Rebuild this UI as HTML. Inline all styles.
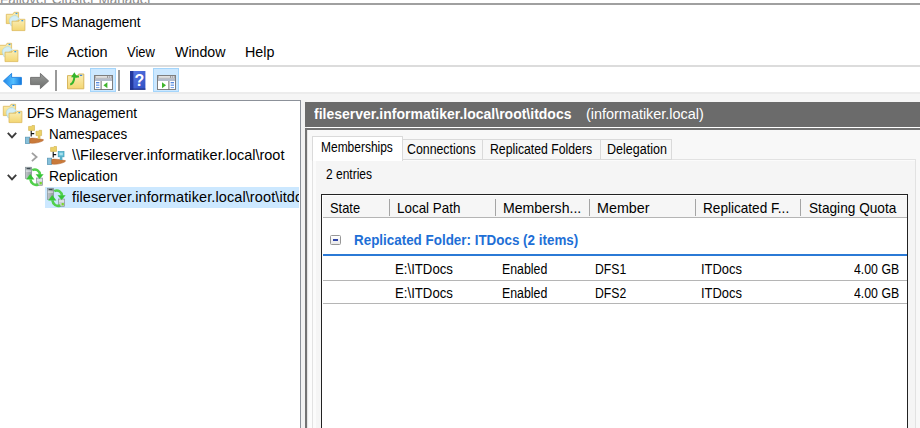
<!DOCTYPE html>
<html><head><meta charset="utf-8"><title>DFS Management</title>
<style>
html,body{margin:0;padding:0}
body{width:920px;height:428px;overflow:hidden;background:#fff;position:relative;font-family:"Liberation Sans",sans-serif;font-size:13.5px;color:#000}
.a{position:absolute;white-space:nowrap;line-height:16px}
.b{position:absolute}
svg{position:absolute;overflow:visible}
</style></head><body>
<!-- cut-off title of parent window -->
<!-- menu bottom line -->
<div class="b" style="left:0;top:65px;width:920px;height:2px;background:#dcdcdc"></div>
<!-- band under toolbar -->
<div class="b" style="left:0;top:92px;width:920px;height:9.5px;background:#f5f5f5"></div>
<div class="b" style="left:0;top:92px;width:920px;height:2px;background:#ececec"></div>
<!-- toolbar toggles -->
<div class="b" style="left:89.5px;top:68px;width:26.5px;height:24px;background:#cce8ff;border:1px solid #a4d5fb;box-sizing:border-box"></div>
<div class="b" style="left:152.8px;top:68px;width:26.5px;height:24px;background:#cce8ff;border:1px solid #a4d5fb;box-sizing:border-box"></div>
<div class="b" style="left:55.1px;top:70.2px;width:1.8px;height:20.7px;background:#999"></div>
<div class="b" style="left:118.4px;top:70.2px;width:1.8px;height:20.7px;background:#999"></div>
<div class="b" style="left:299px;top:100px;width:8px;height:330px;background:#f2f2f2"></div>
<!-- tree -->
<div class="b" style="left:-1px;top:100px;width:302px;height:340px;border:1.3px solid #8c9199;box-sizing:border-box;background:#fff"></div>
<div class="b" style="left:45px;top:187px;width:253.7px;height:20.7px;background:#cce8ff"></div>
<!-- right pane background -->
<div class="b" style="left:305px;top:101.5px;width:615px;height:25px;background:#6b6b6b"></div>
<div class="b" style="left:305px;top:128px;width:615px;height:300px;background:#f8f8f8"></div>
<div class="b" style="left:306.8px;top:130px;width:1.7px;height:300px;background:#e6e6e6"></div>
<div class="b" style="left:308.5px;top:160px;width:8px;height:270px;background:#fcfcfc"></div>
<div class="b" style="left:305px;top:128px;width:615px;height:2.4px;background:#737373"></div>
<div class="b" style="left:304.6px;top:128px;width:2.2px;height:300px;background:#737373"></div>
<!-- tab page -->
<div class="b" style="left:312.1px;top:159px;width:603.8px;height:280px;border:1px solid #e2e2e2;box-sizing:border-box;background:#fbfbfb"></div>
<div class="b" style="left:316px;top:161px;width:598.5px;height:270px;background:#f5f5f5"></div>
<!-- tabs -->
<div class="b" style="left:402px;top:138.5px;width:269.5px;height:21.5px;border:1px solid #dadada;box-sizing:border-box;background:#f7f7f7"></div>
<div class="b" style="left:482.3px;top:138.5px;width:1px;height:21px;background:#dadada"></div>
<div class="b" style="left:599.5px;top:138.5px;width:1px;height:21px;background:#dadada"></div>
<div class="b" style="left:312.3px;top:136.3px;width:90.6px;height:25px;border:1px solid #dadada;border-bottom:none;box-sizing:border-box;background:#fff"></div>
<!-- list -->
<div class="b" style="left:321px;top:194px;width:587.3px;height:260px;border:1.7px solid #222;box-sizing:border-box;background:#fff"></div>
<div class="b" style="left:322.6px;top:195.7px;width:584px;height:21.6px;background:#f6f6f6"></div>
<div class="b" style="left:322.6px;top:217.3px;width:584px;height:1.2px;background:#b5b5b5"></div>
<div class="b" style="left:389px;top:199px;width:1.2px;height:17px;background:#a5a5a5"></div>
<div class="b" style="left:495px;top:199px;width:1.2px;height:17px;background:#a5a5a5"></div>
<div class="b" style="left:589px;top:199px;width:1.2px;height:17px;background:#a5a5a5"></div>
<div class="b" style="left:695px;top:199px;width:1.2px;height:17px;background:#a5a5a5"></div>
<div class="b" style="left:800.2px;top:199px;width:1.2px;height:17px;background:#a5a5a5"></div>
<!-- group -->
<div class="b" style="left:330.2px;top:235px;width:10.5px;height:10.4px;border:1.4px solid #979797;border-radius:1.5px;box-sizing:border-box;background:linear-gradient(#fff,#e9e9e9)"></div>
<div class="b" style="left:332.8px;top:239.4px;width:5.4px;height:1.5px;background:#2f45a8"></div>
<div class="b" style="left:322.6px;top:254.2px;width:584px;height:1.8px;background:#2b7ad6"></div>
<div class="b" style="left:322.6px;top:279.6px;width:584px;height:1.1px;background:#b5b5b5"></div>
<div class="b" style="left:322.6px;top:303.4px;width:584px;height:1.1px;background:#b5b5b5"></div>
<svg width="0" height="0" style="left:0;top:0">
<defs>
<linearGradient id="fg" x1="0" y1="0" x2="0" y2="1"><stop offset="0" stop-color="#fbefb8"/><stop offset="1" stop-color="#f3d672"/></linearGradient>
<linearGradient id="bg1" x1="0" y1="0" x2="1" y2="0"><stop offset="0" stop-color="#1f86e8"/><stop offset="0.55" stop-color="#55c0ff"/><stop offset="1" stop-color="#1478dc"/></linearGradient>
<linearGradient id="gg1" x1="0" y1="0" x2="0" y2="1"><stop offset="0" stop-color="#9a9c9a"/><stop offset="1" stop-color="#6c6e6c"/></linearGradient>
<linearGradient id="hg" x1="0" y1="0" x2="1" y2="1"><stop offset="0" stop-color="#5b7be6"/><stop offset="1" stop-color="#2f4fc4"/></linearGradient>
<linearGradient id="sv" x1="0" y1="0" x2="1" y2="0"><stop offset="0" stop-color="#c4cacc"/><stop offset="1" stop-color="#8e989c"/></linearGradient>
<g id="dfs">
  <path d="M0.3 2.3 H6.8 L8 0.3 H12.6 V11.6 H0.3 Z" fill="url(#fg)" stroke="#dcb95a" stroke-width="0.8"/>
  <rect x="9.6" y="0.8" width="1.8" height="1.3" fill="#3d9be0"/>
  <path d="M3.4 9.6 C2.8 5.8 6.5 3 10.4 3.8 L13.4 6.8 L9.6 9.2 L8.6 13.2 L5 13.8 Z" fill="#d4eef6" stroke="#a8d6e8" stroke-width="0.6"/>
  <path d="M6 9.2 H12.8 L14 7.3 H18.9 V18.6 H6 Z" fill="url(#fg)" stroke="#dcb95a" stroke-width="0.8"/>
  <rect x="15.4" y="8" width="1.8" height="1.3" fill="#3d9be0"/>
</g>
<g id="hand">
  <rect x="0.4" y="12.2" width="4.2" height="6.2" fill="#86c0da" stroke="#5f9cba" stroke-width="0.8"/>
  <path d="M4.8 13.4 C8 12.6 12 13.6 18.4 14.6 C19 15.6 17 16.6 13 17.6 C10 18.4 7 18.4 4.8 18 Z" fill="#c97a3a" stroke="#b0602a" stroke-width="0.5"/>
  <path d="M6.2 5.5 V11.4 M6.2 8.6 H9.2" stroke="#111" stroke-width="1.1" fill="none"/>
  <path d="M3.6 1.4 H6.4 L7 0.5 H9.5 V5.4 H3.6 Z" fill="#ecd166" stroke="#cfae48" stroke-width="0.6"/>
</g>
<g id="ns">
  <use href="#hand"/>
  <path d="M11 6.2 H13.6 L14.2 5.3 H16.6 V10.6 H11 Z" fill="#ecd166" stroke="#cfae48" stroke-width="0.6"/>
  <rect x="12.8" y="10.6" width="2.6" height="3.4" fill="#e2c45a"/>
</g>
<g id="nsr">
  <use href="#hand"/>
  <rect x="11.2" y="5.6" width="5.8" height="5.2" fill="#62c0d8" stroke="#3f9cb8" stroke-width="0.7"/>
  <rect x="12.4" y="6.8" width="3.4" height="2.4" fill="#a8e0ee"/>
  <rect x="12.8" y="10.8" width="2.6" height="3.2" fill="#58b0c8"/>
</g>
<g id="rep">
  <rect x="0.4" y="0.2" width="6.2" height="11.2" fill="url(#sv)" stroke="#7a868c" stroke-width="0.6"/>
  <rect x="1.6" y="0.9" width="3.8" height="1.2" fill="#3e4a52"/>
  <rect x="0.8" y="3.6" width="5.4" height="0.9" fill="#eef2f4"/>
  <rect x="11.6" y="11" width="6" height="7.3" fill="#c9d0d4" stroke="#7a868c" stroke-width="0.6"/>
  <rect x="12" y="12.6" width="5.2" height="0.9" fill="#f4f6f8"/>
  <rect x="14.6" y="15" width="2.2" height="2.4" fill="#7ad82a"/>
  <path d="M7.2 3.2 C11 1.2 14.8 3.8 15 7.8" fill="none" stroke="#52d04c" stroke-width="2.6"/>
  <path d="M10.6 7.2 H18.6 L14.6 12 Z" fill="#36c436"/>
  <path d="M13.4 17.4 C9.4 18.8 6 16.6 5.4 12.4" fill="none" stroke="#52d04c" stroke-width="2.6"/>
  <path d="M1.2 12.6 L5.2 7 L9.4 12.6 Z" fill="#36c436"/>
</g>
<g id="win">
  <rect x="0.5" y="0.5" width="18" height="14" fill="#fff" stroke="#7e7e7e" stroke-width="1"/>
  <rect x="1" y="1" width="17" height="2.6" fill="#9a9a9a"/>
  <rect x="1.6" y="1.3" width="11.4" height="1.3" fill="#fff"/>
  <rect x="14" y="1.3" width="1.4" height="1.3" fill="#e8eefa"/><rect x="16" y="1.3" width="1.4" height="1.3" fill="#e8eefa"/>
  <rect x="1" y="3.6" width="17" height="2.4" fill="#b4bccb"/>
</g>
<g id="winl">
  <use href="#win"/>
  <rect x="6.6" y="6" width="1" height="8.5" fill="#6e6e6e"/>
  <rect x="2" y="7.2" width="3.4" height="1.1" fill="#2f6fd6"/><rect x="2" y="9.6" width="3.4" height="1.1" fill="#4a86e0"/><rect x="2" y="12" width="3.4" height="1.1" fill="#7ea8e8"/>
  <path d="M13.4 7.2 V13.2 L9.4 10.2 Z" fill="#3fb52c"/>
</g>
<g id="winr">
  <use href="#win"/>
  <rect x="11.4" y="6" width="1" height="8.5" fill="#6e6e6e"/>
  <rect x="13.6" y="7.2" width="3.4" height="1.1" fill="#2f6fd6"/><rect x="13.6" y="9.6" width="3.4" height="1.1" fill="#4a86e0"/><rect x="13.6" y="12" width="3.4" height="1.1" fill="#7ea8e8"/>
  <path d="M5 7.2 V13.2 L9 10.2 Z" fill="#3fb52c"/>
</g>
</defs>
</svg>
<!-- DFS icons -->
<svg width="20" height="20" style="left:6.2px;top:11.6px"><use href="#dfs"/></svg>
<svg width="20" height="20" style="left:-0.8px;top:43.2px"><use href="#dfs"/></svg>
<svg width="20" height="20" style="left:2.6px;top:104px"><use href="#dfs"/></svg>
<!-- toolbar -->
<svg width="20" height="17" style="left:3px;top:73px"><path d="M0.4 8 L8.6 0.4 V4.4 H18.4 V11.6 H8.6 V15.6 Z" fill="url(#bg1)" stroke="#1b7fe0" stroke-width="0.9" stroke-linejoin="round"/></svg>
<svg width="20" height="17" style="left:30px;top:73px"><path d="M18.6 8 L10.4 0.4 V4.4 H0.6 V11.6 H10.4 V15.6 Z" fill="url(#gg1)" stroke="#6a6a6a" stroke-width="0.9" stroke-linejoin="round"/></svg>
<svg width="18" height="18" style="left:67px;top:72.4px">
  <path d="M0.5 3.6 H10.6 L11.6 2 H16.8 V16.8 H0.5 Z" fill="url(#fg)" stroke="#d4b052" stroke-width="0.9"/>
  <rect x="12.8" y="2.8" width="2.4" height="1.2" fill="#3d86e0"/>
  <path d="M3.2 12.6 C6.4 11.6 7.2 8 7.4 4.6 L12 4.4" fill="none" stroke="#35b52c" stroke-width="2"/>
  <path d="M4 5.2 L7.4 0.2 L10.4 5.6 Z" fill="#35b52c"/>
</svg>
<svg width="19" height="15" style="left:94.1px;top:75px"><use href="#winl"/></svg>
<svg width="19" height="15" style="left:157px;top:75px"><use href="#winr"/></svg>
<svg width="16" height="19" style="left:130.1px;top:71.1px">
  <rect x="0" y="0" width="15.4" height="18.7" fill="url(#hg)"/>
  <rect x="0" y="0" width="3.4" height="18.7" fill="#23389c"/>
  <rect x="0" y="17.6" width="15.4" height="1.1" fill="#1e2f80"/>
  <text x="9.4" y="15.2" text-anchor="middle" font-family="Liberation Sans, sans-serif" font-weight="bold" font-size="16" fill="#fff">?</text>
</svg>
<!-- tree icons -->
<svg width="20" height="20" style="left:25px;top:125px"><use href="#ns"/></svg>
<svg width="20" height="20" style="left:47px;top:146px"><use href="#nsr"/></svg>
<svg width="20" height="20" style="left:25px;top:167px"><use href="#rep"/></svg>
<svg width="20" height="20" style="left:47.2px;top:188px"><use href="#rep"/></svg>
<!-- chevrons -->
<svg width="12" height="8" style="left:7px;top:131.6px"><path d="M0.8 0.9 L5 5.4 L9.2 0.9" fill="none" stroke="#3c3c3c" stroke-width="1.9"/></svg>
<svg width="12" height="8" style="left:7px;top:173.8px"><path d="M0.8 0.9 L5 5.4 L9.2 0.9" fill="none" stroke="#3c3c3c" stroke-width="1.9"/></svg>
<svg width="8" height="12" style="left:31px;top:152px"><path d="M0.9 0.8 L5.6 5 L0.9 9.2" fill="none" stroke="#a0a0a0" stroke-width="1.8"/></svg>

<div class="a" id="fo" style="left:0.07px;top:-9.00px;font-size:14.5px;color:#8c8c8c;transform:scaleX(0.9323);transform-origin:0 0;clip-path:inset(0 0 3px 0);">Failover Cluster Manager</div>
<div class="a" id="title" style="left:31.07px;top:14.00px;font-size:14.5px;color:#000;transform:scaleX(0.9303);transform-origin:0 0;">DFS Management</div>
<div class="a" id="m1" style="left:27.08px;top:44.00px;font-size:14.5px;color:#000;transform:scaleX(0.9238);transform-origin:0 0;">File</div>
<div class="a" id="m2" style="left:67.00px;top:44.00px;font-size:14.5px;color:#000;letter-spacing:0.073px;">Action</div>
<div class="a" id="m3" style="left:127.20px;top:44.00px;font-size:14.5px;color:#000;transform:scaleX(0.8960);transform-origin:0 0;">View</div>
<div class="a" id="m4" style="left:175.00px;top:44.00px;font-size:14.5px;color:#000;transform:scaleX(0.9789);transform-origin:0 0;">Window</div>
<div class="a" id="m5" style="left:244.61px;top:44.00px;font-size:14.5px;color:#000;transform:scaleX(0.9876);transform-origin:0 0;">Help</div>
<div class="a" id="t1" style="left:27.07px;top:105.00px;font-size:14.5px;color:#000;transform:scaleX(0.9345);transform-origin:0 0;">DFS Management</div>
<div class="a" id="t2" style="left:49.48px;top:126.00px;font-size:14.5px;color:#000;transform:scaleX(0.9236);transform-origin:0 0;">Namespaces</div>
<div class="a" id="t3" style="left:72.00px;top:147.00px;font-size:14.5px;color:#000;transform:scaleX(0.9985);transform-origin:0 0;">\\Fileserver.informatiker.local\root</div>
<div class="a" id="t4" style="left:49.44px;top:168.00px;font-size:14.5px;color:#000;transform:scaleX(0.9565);transform-origin:0 0;">Replication</div>
<div class="a" id="h1" style="left:313.60px;top:106.00px;font-size:14.5px;color:#fff;transform:scaleX(0.9652);transform-origin:0 0;font-weight:bold;">fileserver.informatiker.local\root\itdocs</div>
<div class="a" id="h2" style="left:585.60px;top:106.00px;font-size:14.5px;color:#fff;transform:scaleX(0.9947);transform-origin:0 0;">(informatiker.local)</div>
<div class="a" id="c1" style="left:330.40px;top:200.00px;font-size:14.5px;color:#000;transform:scaleX(0.8878);transform-origin:0 0;">State</div>
<div class="a" id="c2" style="left:396.67px;top:200.00px;font-size:14.5px;color:#000;transform:scaleX(0.9250);transform-origin:0 0;">Local Path</div>
<div class="a" id="c3" style="left:502.78px;top:200.00px;font-size:14.5px;color:#000;transform:scaleX(0.9707);transform-origin:0 0;">Membersh...</div>
<div class="a" id="c4" style="left:596.51px;top:200.00px;font-size:14.5px;color:#000;transform:scaleX(0.9885);transform-origin:0 0;">Member</div>
<div class="a" id="c5" style="left:702.81px;top:200.00px;font-size:14.5px;color:#000;transform:scaleX(0.9377);transform-origin:0 0;">Replicated F...</div>
<div class="a" id="c6" style="left:808.75px;top:200.00px;font-size:14.5px;color:#000;transform:scaleX(0.9424);transform-origin:0 0;">Staging Quota</div>
<div class="a" id="g" style="left:353.60px;top:232.00px;font-size:14.5px;color:#1e6fd6;transform:scaleX(0.9246);transform-origin:0 0;font-weight:bold;">Replicated Folder: ITDocs (2 items)</div>
<div class="a" id="tab1" style="left:320.64px;top:139.00px;font-size:14.0px;color:#000;transform:scaleX(0.8551);transform-origin:0 0;">Memberships</div>
<div class="a" id="tab2" style="left:407.00px;top:141.00px;font-size:14.0px;color:#000;transform:scaleX(0.8814);transform-origin:0 0;">Connections</div>
<div class="a" id="tab3" style="left:490.13px;top:141.00px;font-size:14.0px;color:#000;transform:scaleX(0.8749);transform-origin:0 0;">Replicated Folders</div>
<div class="a" id="tab4" style="left:606.86px;top:141.00px;font-size:14.0px;color:#000;transform:scaleX(0.8941);transform-origin:0 0;">Delegation</div>
<div class="a" id="ent" style="left:325.60px;top:166.00px;font-size:14.0px;color:#000;transform:scaleX(0.8567);transform-origin:0 0;">2 entries</div>
<div class="a" id="r1a" style="left:395.31px;top:261.00px;font-size:14.0px;color:#000;transform:scaleX(0.9428);transform-origin:0 0;">E:\ITDocs</div>
<div class="a" id="r1b" style="left:501.62px;top:261.00px;font-size:14.0px;color:#000;transform:scaleX(0.8822);transform-origin:0 0;">Enabled</div>
<div class="a" id="r1c" style="left:595.23px;top:261.00px;font-size:14.0px;color:#000;transform:scaleX(0.8714);transform-origin:0 0;">DFS1</div>
<div class="a" id="r1d" style="left:701.37px;top:261.00px;font-size:14.0px;color:#000;transform:scaleX(0.9253);transform-origin:0 0;">ITDocs</div>
<div class="a" id="r1e" style="left:853.60px;top:261.00px;font-size:14.0px;color:#000;transform:scaleX(0.8799);transform-origin:0 0;">4.00 GB</div>
<div class="a" id="r2a" style="left:395.31px;top:285.00px;font-size:14.0px;color:#000;transform:scaleX(0.9428);transform-origin:0 0;">E:\ITDocs</div>
<div class="a" id="r2b" style="left:501.62px;top:285.00px;font-size:14.0px;color:#000;transform:scaleX(0.8822);transform-origin:0 0;">Enabled</div>
<div class="a" id="r2c" style="left:595.23px;top:285.00px;font-size:14.0px;color:#000;transform:scaleX(0.8714);transform-origin:0 0;">DFS2</div>
<div class="a" id="r2d" style="left:701.37px;top:285.00px;font-size:14.0px;color:#000;transform:scaleX(0.9253);transform-origin:0 0;">ITDocs</div>
<div class="a" id="r2e" style="left:853.60px;top:285.00px;font-size:14.0px;color:#000;transform:scaleX(0.8799);transform-origin:0 0;">4.00 GB</div>
<div class="a" id="t5" style="left:72.00px;top:189.00px;font-size:14.5px;letter-spacing:0.100px;width:226.6px;overflow:hidden">fileserver.informatiker.local\root\itdocs</div>
<div class="b" style="left:0;top:3.4px;width:920px;height:1.2px;background:#a0a0a0"></div>
</body></html>
